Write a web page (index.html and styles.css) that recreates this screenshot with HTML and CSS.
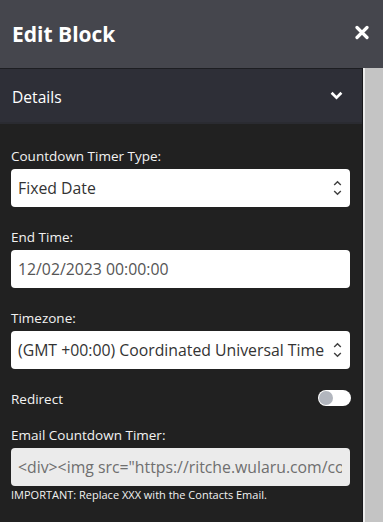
FILE: index.html
```html
<!DOCTYPE html>
<html lang="en">
<head>
<meta charset="utf-8">
<title>Edit Block</title>
<link rel="stylesheet" href="styles.css">
</head>
<body>
<div class="app">
  <header class="topbar">
    <h1 class="title">Edit Block</h1>
    <span class="close" aria-label="Close">
      <svg width="14" height="15" viewBox="0 0 14 15"><path d="M2 2.5 L12 12.5 M12 2.5 L2 12.5" stroke="#fff" stroke-width="3.2" stroke-linecap="round" fill="none"/></svg>
    </span>
  </header>
  <div class="main">
    <div class="panel">
      <div class="section-head">
        <span class="section-title">Details</span>
        <svg class="chev" width="13" height="9" viewBox="0 0 13 9"><polyline points="1.6,1.8 6.5,6.6 11.4,1.8" stroke="#fff" stroke-width="2.7" fill="none"/></svg>
      </div>
      <div class="form">
        <div class="group">
          <div class="label">Countdown Timer Type:</div>
          <div class="field select">
            <span class="value">Fixed Date</span>
            <svg class="arrows" width="9" height="16" viewBox="0 0 9 16"><polyline points="1.2,5 4.5,1.8 7.8,5" stroke="#444" stroke-width="1.5" fill="none"/><polyline points="1.2,11 4.5,14.2 7.8,11" stroke="#444" stroke-width="1.5" fill="none"/></svg>
          </div>
        </div>
        <div class="group">
          <div class="label">End Time:</div>
          <div class="field"><span class="value muted">12/02/2023 00:00:00</span></div>
        </div>
        <div class="group">
          <div class="label">Timezone:</div>
          <div class="field select">
            <span class="value">(GMT +00:00) Coordinated Universal Time</span>
            <svg class="arrows" width="9" height="16" viewBox="0 0 9 16"><polyline points="1.2,5 4.5,1.8 7.8,5" stroke="#444" stroke-width="1.5" fill="none"/><polyline points="1.2,11 4.5,14.2 7.8,11" stroke="#444" stroke-width="1.5" fill="none"/></svg>
          </div>
        </div>
        <div class="toggle-row">
          <span class="label">Redirect</span>
          <span class="toggle"><span class="knob"></span></span>
        </div>
        <div class="group tight">
          <div class="label">Email Countdown Timer:</div>
          <div class="field readonly"><span class="value code">&lt;div&gt;&lt;img src="https://ritche.wularu.com/countdown/timer.gif?email=XXX"&gt;&lt;/div&gt;</span></div>
          <div class="hint">IMPORTANT: Replace XXX with the Contacts Email.</div>
        </div>
      </div>
    </div>
    <div class="gutter"></div>
  </div>
</div>
</body>
</html>
```
FILE: styles.css
```css
* { box-sizing: border-box; }
html, body { margin: 0; padding: 0; }
body {
  width: 383px;
  height: 522px;
  overflow: hidden;
  font-family: "Open Sans", "Noto Sans", sans-serif;
  background: #212121;
}
.app { display: flex; flex-direction: column; height: 522px; }
.topbar {
  height: 68px;
  background: #45464d;
  display: flex;
  align-items: center;
  justify-content: space-between;
  padding: 0 14px 0 12px;
  flex-shrink: 0;
}
.title {
  margin: 0;
  color: #fff;
  font-size: 21px;
  font-weight: 700;
  line-height: 28px;
}
.close { display: flex; margin-top: -4px; }
.main { flex: 1; display: flex; min-height: 0; }
.panel {
  width: 363px;
  background: #212121;
  border-right: 1px solid #17171a;
  flex-shrink: 0;
}
.gutter {
  flex: 1;
  background: #c4c4c4;
  border-left: 2px solid #ececec;
}
.section-head {
  height: 56px;
  background: #2e2f37;
  border-top: 1px solid #1d1e22;
  border-bottom: 2px solid #2a2b31;
  display: flex;
  align-items: center;
  justify-content: space-between;
  padding: 2px 19px 0 12px;
}
.section-title { color: #fff; font-size: 15.6px; line-height: 22px; }
.chev { margin-top: -2px; }
.form { padding: 22px 12px 0 11px; }
.group { margin-bottom: 20px; }
.group.tight { margin-bottom: 0; }
.label {
  color: #f2f2f2;
  font-size: 13.5px;
  line-height: 20px;
  margin-bottom: 3px;
}
.field {
  height: 38px;
  background: #fff;
  border-radius: 4px;
  display: flex;
  align-items: center;
  padding: 0 8px 0 7px;
  overflow: hidden;
}
.value {
  font-size: 15.8px;
  color: #333;
  white-space: nowrap;
  overflow: hidden;
  flex: 1;
}
.value.muted { color: #555; }
.select .arrows { flex-shrink: 0; margin-left: 4px; }
.readonly { background: #ebebeb; }
.value.code { color: #6f6f6f; overflow: hidden; text-overflow: clip; }
.toggle-row {
  height: 20px;
  display: flex;
  align-items: center;
  justify-content: space-between;
  margin-bottom: 16px;
}
.toggle-row .label { margin-bottom: 0; }
.toggle {
  width: 33px;
  height: 16px;
  background: #fff;
  border-radius: 8px;
  display: flex;
  align-items: center;
  padding-left: 1px;
  margin-right: -1px;
  margin-top: -2px;
}
.knob {
  width: 14px;
  height: 14px;
  border-radius: 50%;
  background: #b2b6be;
}
.hint {
  color: #f2f2f2;
  font-size: 11px;
  line-height: 16px;
  margin-top: 1px;
}
```
